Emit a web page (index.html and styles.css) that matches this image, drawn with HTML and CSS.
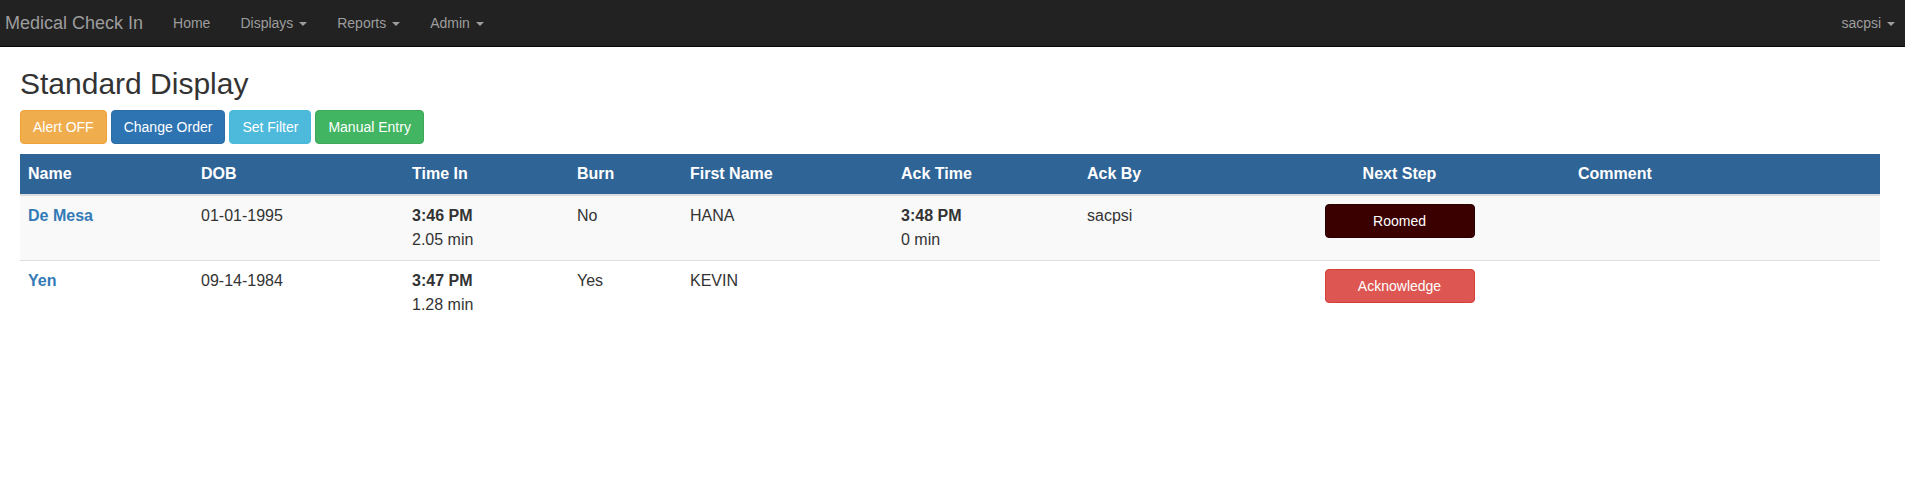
FILE: index.html
```html
<!DOCTYPE html>
<html lang="en">
<head>
<meta charset="utf-8">
<title>Standard Display</title>
<link rel="stylesheet" href="styles.css">
</head>
<body>
<nav class="navbar">
  <div class="nav-left">
    <a class="brand" href="#">Medical Check In</a>
    <a class="nav-link" href="#">Home</a>
    <a class="nav-link" href="#">Displays <span class="caret"></span></a>
    <a class="nav-link" href="#">Reports <span class="caret"></span></a>
    <a class="nav-link" href="#">Admin <span class="caret"></span></a>
  </div>
  <div class="nav-right">
    <a class="nav-link user" href="#">sacpsi <span class="caret"></span></a>
  </div>
</nav>
<main class="container">
  <h2 class="title">Standard Display</h2>
  <div class="toolbar">
    <button class="btn btn-warning">Alert OFF</button>
    <button class="btn btn-primary">Change Order</button>
    <button class="btn btn-info">Set Filter</button>
    <button class="btn btn-success">Manual Entry</button>
  </div>
  <table class="grid">
    <colgroup>
      <col class="c-name"><col class="c-dob"><col class="c-time"><col class="c-burn"><col class="c-first"><col class="c-ack"><col class="c-by"><col class="c-next"><col class="c-comment">
    </colgroup>
    <thead>
      <tr>
        <th>Name</th><th>DOB</th><th>Time In</th><th>Burn</th><th>First Name</th><th>Ack Time</th><th>Ack By</th><th class="center">Next Step</th><th>Comment</th>
      </tr>
    </thead>
    <tbody>
      <tr class="odd">
        <td><a class="pname" href="#">De Mesa</a></td>
        <td>01-01-1995</td>
        <td><b>3:46 PM</b><br>2.05 min</td>
        <td>No</td>
        <td>HANA</td>
        <td><b>3:48 PM</b><br>0 min</td>
        <td>sacpsi</td>
        <td class="center"><button class="step step-roomed">Roomed</button></td>
        <td></td>
      </tr>
      <tr>
        <td><a class="pname" href="#">Yen</a></td>
        <td>09-14-1984</td>
        <td><b>3:47 PM</b><br>1.28 min</td>
        <td>Yes</td>
        <td>KEVIN</td>
        <td></td>
        <td></td>
        <td class="center"><button class="step step-ack">Acknowledge</button></td>
        <td></td>
      </tr>
    </tbody>
  </table>
</main>
</body>
</html>
```

FILE: styles.css
```css
* { box-sizing: border-box; }

body {
  margin: 0;
  font-family: "Liberation Sans", Arial, Helvetica, sans-serif;
  font-size: 14px;
  line-height: 20px;
  color: #333;
  background: #fff;
}

a { text-decoration: none; }

.navbar {
  display: flex;
  justify-content: space-between;
  align-items: center;
  height: 47px;
  background: #222;
  border-bottom: 1px solid #080808;
}

.nav-left, .nav-right {
  display: flex;
  align-items: center;
}

.brand {
  font-size: 18px;
  line-height: 20px;
  color: #9d9d9d;
  padding: 0 15px 0 5px;
}

.nav-link {
  color: #9d9d9d;
  font-size: 14px;
  line-height: 20px;
  padding: 0 15px;
}

.nav-link.user {
  padding: 0 10px 0 15px;
}

.caret {
  display: inline-block;
  width: 0;
  height: 0;
  margin-left: 2px;
  vertical-align: middle;
  border-top: 4px solid #9d9d9d;
  border-left: 4px solid transparent;
  border-right: 4px solid transparent;
}

.container {
  padding: 0 25px 0 20px;
}

.title {
  margin: 20px 0 10px;
  font-size: 30px;
  line-height: 1.1;
  font-weight: 500;
  color: #333;
}

.toolbar {
  display: flex;
  gap: 4px;
}

.btn {
  font-family: inherit;
  font-size: 14px;
  line-height: 20px;
  padding: 6px 12px;
  border: 1px solid transparent;
  border-radius: 4px;
  color: #fff;
  cursor: pointer;
}

.btn-warning { background: #f0ad4e; border-color: #eea236; }
.btn-primary { background: #2e74b3; border-color: #2e6da4; }
.btn-info { background: #4dbadc; border-color: #46b8da; }
.btn-success { background: #41b561; border-color: #3ea758; }

.grid {
  margin-top: 10px;
  width: 1860px;
  border-collapse: collapse;
  table-layout: fixed;
  font-size: 16px;
  line-height: 24px;
}

.c-name { width: 173px; }
.c-dob { width: 211px; }
.c-time { width: 165px; }
.c-burn { width: 113px; }
.c-first { width: 211px; }
.c-ack { width: 186px; }
.c-by { width: 150px; }
.c-next { width: 341px; }
.c-comment { width: 310px; }

.grid th {
  background: #2f6497;
  color: #fff;
  font-weight: bold;
  text-align: left;
  padding: 8px;
  border-bottom: 2px solid #ddd;
}

.grid td {
  padding: 8px;
  vertical-align: top;
  border-top: 1px solid #ddd;
  color: #333;
}

.grid tbody tr:first-child td { border-top: 0; }

.grid tr.odd td { background: #f9f9f9; }

.grid .center { text-align: center; }

.pname {
  color: #337ab7;
  font-weight: bold;
}

.step {
  display: inline-block;
  vertical-align: top;
  width: 150px;
  font-family: inherit;
  font-size: 14px;
  line-height: 20px;
  padding: 6px 12px;
  border: 1px solid transparent;
  border-radius: 4px;
  color: #fff;
  cursor: pointer;
}

.step-roomed { background: #3a0000; border-color: #2a0000; }
.step-ack { background: #de5652; border-color: #d43f3a; }
```
